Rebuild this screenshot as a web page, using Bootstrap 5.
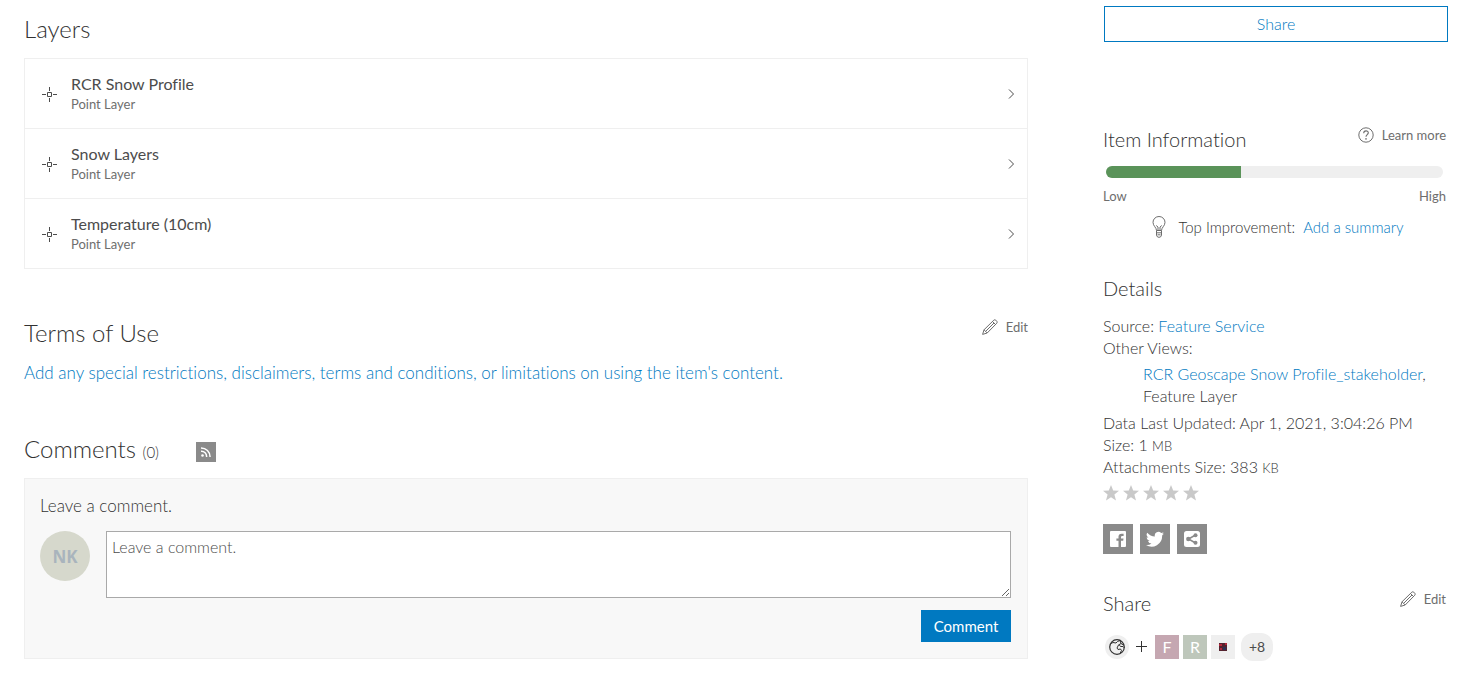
<!DOCTYPE html>
<html lang="en">
<head>
<meta charset="utf-8">
<meta name="viewport" content="width=device-width, initial-scale=1">
<title>RCR Geoscape Snow Profile</title>
<link href="https://cdn.jsdelivr.net/npm/bootstrap@5.3.0/dist/css/bootstrap.min.css" rel="stylesheet">
<style>
  body { font-family: Lato, "Open Sans", sans-serif; font-size: 16px; line-height: 22px; color: #323232; background: #fff; font-weight: 300; font-variant-ligatures: none; }
  a { color: #0079c1; text-decoration: none; }
  a:hover { text-decoration: underline; }
  svg { display: block; flex: none; }
  .item-page { padding: 0 28px 24px 24px; }
  .title-lg { font-size: 24px; line-height: 32px; font-weight: 300; margin: 0; }
  .title-md { font-size: 20px; line-height: 28px; font-weight: 300; margin: 0; }
  .item-main { padding-top: 13px; }
  .item-aside { padding-top: 6px; }
  .block-gap { margin-top: 48px; }
  .layer-list { border: 1px solid #efefef; margin-top: 13px; }
  .layer-row { height: 70px; padding: 0 12px 0 17px; color: inherit; }
  .layer-row:not(:last-child) { border-bottom: 1px solid #efefef; }
  .layer-row:last-child { height: 69px; }
  .layer-row:hover { text-decoration: none; background: #f8f8f8; }
  .layer-icon { margin-top: 2px; }
  .layer-text { padding-left: 14px; }
  .layer-name { font-size: 16px; line-height: 20px; font-weight: 400; color: #4c4c4c; }
  .note { font-size: 13px; line-height: 20px; font-weight: 400; color: #6e6e6e; }
  .terms-link { font-size: 17px; line-height: 24px; margin-top: 12px; margin-bottom: 1px; }
  .comment-count { font-size: 15px; line-height: 20px; }
  .gray-tile { background: #8a8a8a; color: #fff; display: flex; align-items: center; justify-content: center; }
  .rss-tile { width: 20px; height: 20px; margin: 6px 0 0 37px; }
  .social-tile { width: 30px; height: 30px; }
  .comment-panel { background: #f8f8f8; border: 1px solid #efefef; padding: 15px 16px 16px 15px; margin-top: 13px; }
  .comment-label { font-size: 17px; line-height: 24px; margin-bottom: 13px; display: block; }
  .avatar { width: 50px; height: 50px; flex: none; border-radius: 50%; background: #d6d8cc; color: #a9b4bd; font: 700 17px "Open Sans", sans-serif; }
  .comment-box { height: 67px; border: 1px solid #a9a9a9; border-radius: 0; padding: 4px 5px; font-size: 16px; line-height: 22px; font-weight: 300; resize: both; color: #323232; }
  .comment-box::placeholder { color: #4c4c4c; }
  .comment-btn { background: #0079c1; color: #fff; border-radius: 0; border: 0; width: 90px; height: 32px; padding: 0; font-size: 15px; }
  .comment-btn:hover { background: #005e95; color: #fff; }
  .share-btn { border: 1px solid #0079c1; border-radius: 0; color: #0079c1; height: 36px; padding: 0; font-size: 16px; font-weight: 300; margin-left: 1px; }
  .share-btn:hover { background: #0079c1; color: #fff; }
  .info-head { margin-top: 83px; }
  .aside-row { padding-right: 2px; }
  .score { height: 12px; border-radius: 6px; background: #efefef; margin: 13px 5px 8px 3px; }
  .score .progress-bar { background: #5a9359; }
  .improve { font-size: 15px; line-height: 24px; margin-top: 9px; padding-left: 5px; }
  .details-head { margin-top: 35px; }
  .detail-list { font-size: 16px; margin-top: 13px; }
  .detail-views { margin: 4px 0 5px 40px; }
  .unit { font-size: 13px; line-height: 16px; }
  .stars { gap: 4px; color: #c9c9c9; margin-top: 7px; }
  .socials { gap: 7px; margin-top: 23px; }
  .share-head { margin-top: 35px; }
  .share-row { margin-top: 16px; padding-left: 2px; height: 28px; }
  .chip { width: 24px; height: 24px; font-size: 16px; font-weight: 400; color: #fff; display: flex; align-items: center; justify-content: center; }
  .chip-pale { background: #efefef; color: #323232; }
  .chip-rose { background: #c5a7b1; }
  .chip-sage { background: #bec7bb; }
  .plus-sign { margin: 0 7px; }
  .more-chip { width: 32px; height: 28px; border: 0; border-radius: 12px; background: #efefef; font-size: 14px; color: #4c4c4c; padding: 0; margin-left: 6px; }
  @media (min-width: 992px) {
    .item-page { display: grid; grid-template-columns: minmax(0, 1fr) 345px; column-gap: 75px; }
  }
</style>
</head>
<body>
<svg class="d-none" aria-hidden="true">
  <symbol id="point" viewBox="0 0 15 15"><path d="M7.500 0v4M7.500 11v4M0 7.500h4M11 7.500h4M5.500 5.500h4v4h-4z" fill="none" stroke="#4c4c4c"/></symbol>
  <symbol id="chevron" viewBox="0 0 8 12"><path d="M2 1.500 6.500 6 2 10.500" fill="none" stroke="#4c4c4c"/></symbol>
  <symbol id="pencil" viewBox="0 0 16 16"><path d="M.6 15.400 2 10.800 11.800 1.200q1-.9 2 0l1 1q.8 1 0 2L5.200 14zM2 10.800 5.200 14M10.500 2.500l3 3M3.800 12.200l8.200-8.200" fill="none" stroke="#6e6e6e" stroke-linejoin="round"/></symbol>
  <symbol id="star" viewBox="0 0 16 16"><path d="m8 0 2.200 5.500 5.800.3-4.600 3.800 1.600 5.900L8 12.200l-5 3.300 1.600-5.900L0 5.800l5.800-.3z" fill="currentColor"/></symbol>
</svg>

<div class="item-page">
  <main class="item-main">
    <section>
      <h2 class="title-lg">Layers</h2>
      <div class="layer-list">
        <a href="#" class="layer-row d-flex align-items-center">
          <svg class="layer-icon" width="15" height="15"><use href="#point"/></svg>
          <span class="layer-text d-flex flex-column flex-grow-1"><span class="layer-name">RCR Snow Profile</span><span class="note">Point Layer</span></span>
          <svg width="8" height="12"><use href="#chevron"/></svg>
        </a>
        <a href="#" class="layer-row d-flex align-items-center">
          <svg class="layer-icon" width="15" height="15"><use href="#point"/></svg>
          <span class="layer-text d-flex flex-column flex-grow-1"><span class="layer-name">Snow Layers</span><span class="note">Point Layer</span></span>
          <svg width="8" height="12"><use href="#chevron"/></svg>
        </a>
        <a href="#" class="layer-row d-flex align-items-center">
          <svg class="layer-icon" width="15" height="15"><use href="#point"/></svg>
          <span class="layer-text d-flex flex-column flex-grow-1"><span class="layer-name">Temperature (10cm)</span><span class="note">Point Layer</span></span>
          <svg width="8" height="12"><use href="#chevron"/></svg>
        </a>
      </div>
    </section>

    <section class="block-gap">
      <div class="d-flex justify-content-between">
        <h2 class="title-lg">Terms of Use</h2>
        <a href="#" class="note d-flex align-items-center gap-2 align-self-start"><svg width="16" height="16"><use href="#pencil"/></svg>Edit</a>
      </div>
      <a href="#" class="terms-link d-block">Add any special restrictions, disclaimers, terms and conditions, or limitations on using the item's content.</a>
    </section>

    <section class="block-gap">
      <div class="d-flex align-items-center">
        <h2 class="title-lg">Comments <span class="comment-count">(0)</span></h2>
        <a href="#" class="gray-tile rss-tile" aria-label="Comments feed">
          <svg width="10" height="10" viewBox="0 0 10 10"><circle cx="1.500" cy="8.500" r="1.300" fill="#fff"/><path d="M0 4.200A5.300 5.300 0 0 1 5.600 10M0 .9A9 9 0 0 1 9.100 10" fill="none" stroke="#fff" stroke-width="1.500"/></svg>
        </a>
      </div>
      <form class="comment-panel">
        <label class="comment-label" for="comment">Leave a comment.</label>
        <div class="d-flex gap-3">
          <div class="avatar d-flex align-items-center justify-content-center">NK</div>
          <textarea id="comment" class="comment-box form-control" placeholder="Leave a comment."></textarea>
        </div>
        <div class="d-flex justify-content-end pt-2 mt-1"><button type="button" class="btn comment-btn">Comment</button></div>
      </form>
    </section>
  </main>

  <aside class="item-aside">
    <div class="d-flex"><button type="button" class="btn share-btn flex-grow-1">Share</button></div>

    <section class="info-head">
      <div class="aside-row d-flex justify-content-between">
        <h3 class="title-md">Item Information</h3>
        <a href="#" class="note d-flex align-items-center gap-2 align-self-start">
          <svg width="16" height="16" viewBox="0 0 16 16"><circle cx="8" cy="8" r="7.200" fill="none" stroke="#6e6e6e"/><path d="M5.700 6.300C5.700 3 10.400 3.200 10.300 5.900 10.200 7.500 8 7.700 8 9.700" fill="none" stroke="#6e6e6e" stroke-width="1.100"/><circle cx="8" cy="11.900" r=".8" fill="#6e6e6e"/></svg>Learn more</a>
      </div>
      <div class="progress score" role="progressbar" aria-label="Item information" aria-valuenow="40" aria-valuemin="0" aria-valuemax="100"><div class="progress-bar" style="width:40%"></div></div>
      <div class="note aside-row d-flex justify-content-between"><span>Low</span><span>High</span></div>
      <div class="improve d-flex justify-content-center align-items-center">
        <svg width="14" height="22" viewBox="0 0 14 22"><path d="M4.500 14.500C4.500 11.500 1 10 1 6.300a6 5.800 0 0 1 12 0c0 3.700-3.500 5.200-3.500 8.200v4.500q0 2-2.500 2.400-2.500-.4-2.500-2.400zM4.500 14.500h5M4.500 16.800h5M5.500 18.800h3M6 14.500V11L4.200 9.500M8 14.500V11l1.800-1.500" fill="none" stroke="#6e6e6e"/></svg>
        <span class="ms-2 ps-1">Top Improvement:</span><a href="#" class="ms-2">Add a summary</a>
      </div>
    </section>

    <section class="details-head">
      <h3 class="title-md">Details</h3>
      <div class="detail-list">
        <div>Source: <a href="#">Feature Service</a></div>
        <div>Other Views:</div>
        <div class="detail-views"><a href="#">RCR Geoscape Snow Profile_stakeholder</a>,<br>Feature Layer</div>
        <div>Data Last Updated: Apr 1, 2021, 3:04:26 PM</div>
        <div>Size: 1 <span class="unit">MB</span></div>
        <div>Attachments Size: 383 <span class="unit">KB</span></div>
      </div>
      <div class="stars d-flex" role="img" aria-label="No ratings yet">
        <svg width="16" height="16"><use href="#star"/></svg>
        <svg width="16" height="16"><use href="#star"/></svg>
        <svg width="16" height="16"><use href="#star"/></svg>
        <svg width="16" height="16"><use href="#star"/></svg>
        <svg width="16" height="16"><use href="#star"/></svg>
      </div>
      <div class="socials d-flex">
        <a href="#" class="gray-tile social-tile" aria-label="Facebook"><svg width="16" height="16" viewBox="0 0 16 16"><path fill="#fff" d="M1 0h14q1 0 1 1v14q0 1-1 1h-4V9.800h2.200l.3-2.300H11V6q0-1.100 1.200-1.100h1.400V2.700h-2Q8.500 2.700 8.500 5.600v1.900H6.400v2.300h2.100V16H1q-1 0-1-1V1q0-1 1-1z"/></svg></a>
        <a href="#" class="gray-tile social-tile" aria-label="Twitter"><svg width="18" height="16" viewBox="0 0 24 21"><path fill="#fff" d="M24 3.300a10 10 0 0 1-2.800.8A5 5 0 0 0 23.300 1.400a10 10 0 0 1-3.100 1.200 4.900 4.900 0 0 0-8.400 4.500A14 14 0 0 1 1.700 2a4.900 4.900 0 0 0 1.500 6.600A5 5 0 0 1 1 8a4.900 4.900 0 0 0 3.900 4.900 5 5 0 0 1-2.200.1 4.900 4.900 0 0 0 4.600 3.400A9.900 9.900 0 0 1 0 18.400a14 14 0 0 0 21.500-12.500A10 10 0 0 0 24 3.300z"/></svg></a>
        <a href="#" class="gray-tile social-tile" aria-label="Share link"><svg width="16" height="16" viewBox="0 0 16 16"><rect width="16" height="16" rx="2.500" fill="#fff"/><path d="M11.500 4 4.500 8l7 4" fill="none" stroke="#8a8a8a" stroke-width="1.500"/><circle cx="11.500" cy="4.200" r="2" fill="#8a8a8a"/><circle cx="4.300" cy="8" r="2.200" fill="#8a8a8a"/><circle cx="11.500" cy="11.800" r="2" fill="#8a8a8a"/></svg></a>
      </div>
    </section>

    <section class="share-head">
      <div class="aside-row d-flex justify-content-between">
        <h3 class="title-md">Share</h3>
        <a href="#" class="note d-flex align-items-center gap-2 align-self-start"><svg width="16" height="16"><use href="#pencil"/></svg>Edit</a>
      </div>
      <div class="share-row d-flex align-items-center">
        <span class="chip chip-pale rounded-circle"><svg width="16" height="16" viewBox="0 0 16 16"><circle cx="8" cy="8" r="7.300" fill="none" stroke="#323232" stroke-width="1.200"/><path d="M2 4.500 4 3.500l3 .5 1.500-1.500L11 1.500M11 1.500 12 4.500l2.500 1.500M12 4.500 9.500 6 8 9l1 1.500 2.500-.5 1 1.500-1.500 3M10 5.500l1.500 2 2.500 0 1.500 1.500" fill="none" stroke="#323232"/></svg></span>
        <svg class="plus-sign" width="12" height="12" viewBox="0 0 12 12"><path d="M5.500 0v11M0 5.500h11" stroke="#323232"/></svg>
        <span class="d-flex gap-1">
          <span class="chip chip-rose">F</span>
          <span class="chip chip-sage">R</span>
          <span class="chip chip-pale"><svg width="8" height="8" viewBox="0 0 8 8"><path fill="#54232f" d="M0 0h8v8H0z"/><path fill="#b5283c" d="M0 1h3v2H0zM6 0h2v2H6zM1 5h2v2H1z"/><path fill="#2d3155" d="M4 4h3v3H4z"/></svg></span>
        </span>
        <button type="button" class="more-chip">+8</button>
      </div>
    </section>
  </aside>
</div>
<script src="https://cdn.jsdelivr.net/npm/bootstrap@5.3.0/dist/js/bootstrap.bundle.min.js"></script>
</body>
</html>
